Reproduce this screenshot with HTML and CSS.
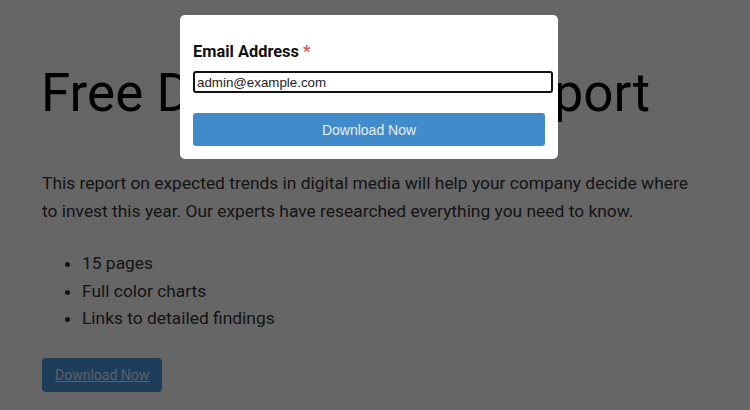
FILE: index.html
```html
<!DOCTYPE html>
<html lang="en">
<head>
    <meta charset="UTF-8">
    <meta name="viewport" content="width=device-width, initial-scale=1.0">
    <title>Free Digital Trends Report</title>
    <link rel="stylesheet" href="styles.css">
</head>
<body>
    <div class="page">
        <h1>Free Digital Trends Report</h1>
        <p>This report on expected trends in digital media will help your company decide where to invest this year. Our experts have researched everything you need to know.</p>
        <ul>
            <li>15 pages</li>
            <li>Full color charts</li>
            <li>Links to detailed findings</li>
        </ul>
        <a href="#" class="cta">Download Now</a>
    </div>

    <!-- Modal overlay -->
    <div class="overlay"></div>
    <div class="modal">
        <form class="modal-form">
            <label for="email">Email Address <span class="req">*</span></label>
            <input type="email" id="email" value="admin@example.com">
            <button type="button">Download Now</button>
        </form>
    </div>
</body>
</html>
```

FILE: styles.css
```css
body {
    font-family: Roboto, 'Noto Sans', sans-serif;
    background-color: #ffffff;
    color: #333;
    margin: 0;
    padding: 0;
}

.page {
    padding: 63px 50px 20px 42px;
}

h1 {
    font-size: 53px;
    font-weight: 400;
    color: #000;
    margin: 0 0 47px -1px;
    line-height: 60px;
}

p {
    font-size: 17.4px;
    line-height: 1.6;
    margin: 0 0 24px;
}

ul {
    font-size: 17.4px;
    line-height: 1.6;
    margin: 0 0 25px;
    padding-left: 40px;
}

.cta {
    display: inline-block;
    background-color: #4a98e4;
    color: #dfeeff;
    font-size: 14px;
    padding: 7px 13px;
    border-radius: 4px;
    line-height: 20px;
}

.overlay {
    position: fixed;
    top: 0;
    left: 0;
    right: 0;
    bottom: 0;
    background-color: rgba(0, 0, 0, 0.6);
}

.modal {
    position: fixed;
    top: 15px;
    left: 180px;
    width: 352px;
    padding: 27px 13px 13px;
    background-color: #fff;
    border-radius: 5px;
}

.modal-form label {
    display: block;
    font-weight: 700;
    font-size: 16.4px;
    color: #111;
    margin-bottom: 10px;
}

.req {
    color: #d9534f;
}

.modal-form input {
    display: block;
    width: 352px;
    height: 18px;
    padding: 0 2px;
    border: 2px solid #111;
    border-radius: 3px;
    font-family: 'Liberation Sans', Arial, sans-serif;
    font-size: 13.33px;
    color: #222;
    margin-bottom: 20px;
}

.modal-form button {
    display: block;
    width: 100%;
    height: 33px;
    background-color: #428bca;
    border: none;
    border-radius: 3px;
    color: #e6eef6;
    font-family: 'Liberation Sans', Arial, sans-serif;
    font-size: 14px;
}
```
